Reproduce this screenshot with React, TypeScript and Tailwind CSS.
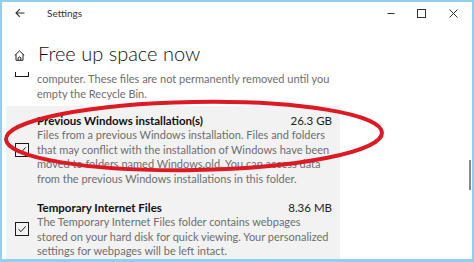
import React from "react"

const font = { fontFamily: 'Lato, "Open Sans", sans-serif' }

function Checkbox({ checked }: { checked?: boolean }) {
    return (
        <div className="w-[14px] h-[14px] border-[1.5px] border-[#1a1a1a] shrink-0 flex items-center justify-center">
            {checked && (
                <svg width="10" height="10" viewBox="0 0 10 10" fill="none">
                    <path d="M1.5 5.2 L4 7.6 L8.6 2.4" stroke="#1a1a1a" strokeWidth="1" />
                </svg>
            )}
        </div>
    )
}

function Item({ title, size, lines }: { title: string; size: string; lines: string[] }) {
    return (
        <div className="flex items-center">
            <Checkbox checked />
            <div className="ml-[8px] w-[295px]">
                <div className="flex justify-between leading-[15px]">
                    <span className="text-[11.5px] font-bold text-[#111]">{title}</span>
                    <span className="text-[11.5px] text-[#222]">{size}</span>
                </div>
                <div className="text-[11px] leading-[14.5px] text-[#6e6e6e] whitespace-nowrap">
                    {lines.map((l, i) => (
                        <div key={i}>{l}</div>
                    ))}
                </div>
            </div>
        </div>
    )
}

export default function App() {
    return (
        <div
            className="relative w-[474px] h-[262px] overflow-hidden bg-white border-t-[2px] border-l-[2px] border-r-[2px] border-b-[3px] border-[#8fd0f2]"
            style={font}
        >
            {/* title bar */}
            <div className="h-[22px] flex items-center">
                <svg className="ml-[13px]" width="10" height="10" viewBox="0 0 10 10" fill="none">
                    <path d="M9.5 5 H1 M4.8 1.2 L1 5 L4.8 8.8" stroke="#333" strokeWidth="1.1" />
                </svg>
                <span className="ml-[22px] text-[10px] text-[#333] mt-[1px]">Settings</span>
                <div className="ml-auto flex items-center">
                    <svg width="8" height="8" viewBox="0 0 8 8" fill="none">
                        <path d="M0.5 4.5 H7.5" stroke="#333" strokeWidth="1" />
                    </svg>
                    <svg className="ml-[22px]" width="9" height="9" viewBox="0 0 9 9" fill="none">
                        <rect x="0.5" y="0.5" width="8" height="8" stroke="#333" strokeWidth="1" />
                    </svg>
                    <svg className="ml-[23px] mr-[14px]" width="9" height="9" viewBox="0 0 9 9" fill="none">
                        <path d="M0.5 0.5 L8.5 8.5 M8.5 0.5 L0.5 8.5" stroke="#333" strokeWidth="1" />
                    </svg>
                </div>
            </div>

            {/* heading */}
            <div className="mt-[15px] flex items-center h-[28px]">
                <svg className="ml-[12px] mt-[4px]" width="11" height="11" viewBox="0 0 11 11" fill="none">
                    <path d="M0.8 5.4 L5.5 0.9 L10.2 5.4 M2 4.3 V10.3 H9 V4.3 M4.2 10.3 V7.6 Q5.5 6.3 6.8 7.6 V10.3" stroke="#222" strokeWidth="1" />
                </svg>
                <h1 className="ml-[13px] text-[20px] font-light text-[#111] leading-[28px]">Free up space now</h1>
            </div>

            {/* partially scrolled item */}
            <div className="mt-[5px] flex items-start pl-[13px]">
                <div className="w-[14px] h-[5px] border-x-[1.5px] border-b-[1.5px] border-[#1a1a1a]" />
                <div className="ml-[8px] text-[11px] leading-[14.5px] text-[#6e6e6e] whitespace-nowrap">
                    <div>computer. These files are not permanently removed until you</div>
                    <div>empty the Recycle Bin.</div>
                </div>
            </div>

            {/* hovered list area */}
            <div className="ml-[4px] mt-[5px] w-[334px] h-[160px] bg-[#f2f2f2] pl-[9px] pt-[7px] flex flex-col gap-[14px]">
                <Item
                    title="Previous Windows installation(s)"
                    size="26.3 GB"
                    lines={[
                        "Files from a previous Windows installation.  Files and folders",
                        "that may conflict with the installation of Windows have been",
                        "moved to folders named Windows.old.  You can access data",
                        "from the previous Windows installations in this folder.",
                    ]}
                />
                <Item
                    title="Temporary Internet Files"
                    size="8.36 MB"
                    lines={[
                        "The Temporary Internet Files folder contains webpages",
                        "stored on your hard disk for quick viewing. Your personalized",
                        "settings for webpages will be left intact.",
                    ]}
                />
            </div>

            {/* scroll indicator */}
            <div className="absolute left-[467px] top-[158px] w-[1.5px] h-[30px] bg-[#8a8a8a]" />

            {/* red annotation */}
            <svg className="absolute left-0 top-0 pointer-events-none" width="474" height="262" viewBox="0 0 474 262">
                <ellipse cx="192" cy="134" rx="188" ry="34" fill="none" stroke="#dc1a24" strokeWidth="4" transform="rotate(-1 192 134)" />
            </svg>
        </div>
    )
}
